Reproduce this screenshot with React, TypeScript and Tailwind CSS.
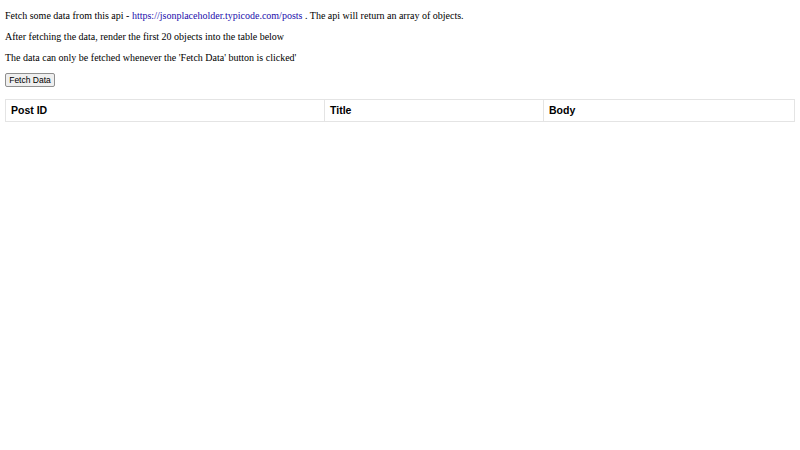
import React from "react";

export default function App() {
  return (
    <div className="w-[800px] h-[450px] bg-white px-[5px] pt-[10px]">
      <div className="flex flex-col gap-[9px] text-[10px] leading-[12px] text-black font-['Liberation_Serif',serif]">
        <p>
          Fetch some data from this api -{" "}
          <a className="text-[#1a0dab]">https://jsonplaceholder.typicode.com/posts</a> . The api will return an array of objects.
        </p>
        <p>After fetching the data, render the first 20 objects into the table below</p>
        <p>The data can only be fetched whenever the 'Fetch Data' button is clicked'</p>
      </div>
      <div className="mt-[9px]">
        <button className="h-[14px] w-[50px] flex items-center justify-center bg-[#efefef] border border-[#8f8f8f] rounded-[2px] text-[8.5px] leading-none font-['Liberation_Sans',sans-serif] text-black">
          Fetch Data
        </button>
      </div>
      <div className="mt-[12px] grid grid-cols-[318px_219px_251px] h-[23px] border border-[#e4e4e4] font-['Liberation_Sans',sans-serif] text-[10.5px] font-bold text-black">
        <div className="flex items-center pl-[5px]">Post ID</div>
        <div className="flex items-center pl-[5px] border-l border-[#e4e4e4]">Title</div>
        <div className="flex items-center pl-[5px] border-l border-[#e4e4e4]">Body</div>
      </div>
    </div>
  );
}
